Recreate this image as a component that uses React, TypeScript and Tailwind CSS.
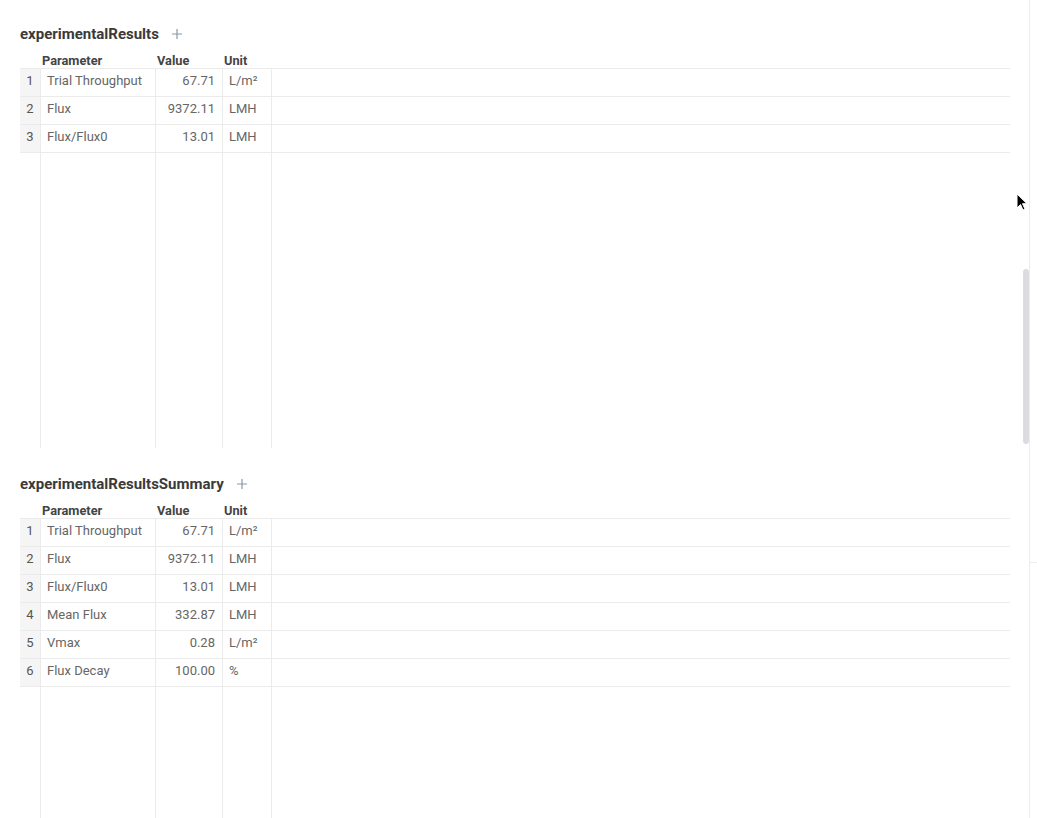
import React from 'react'

type Row = { name: string; value: string; unit: string }

const RESULTS: Row[] = [
  { name: 'Trial Throughput', value: '67.71', unit: 'L/m²' },
  { name: 'Flux', value: '9372.11', unit: 'LMH' },
  { name: 'Flux/Flux0', value: '13.01', unit: 'LMH' },
]

const SUMMARY: Row[] = [
  ...RESULTS,
  { name: 'Mean Flux', value: '332.87', unit: 'LMH' },
  { name: 'Vmax', value: '0.28', unit: 'L/m²' },
  { name: 'Flux Decay', value: '100.00', unit: '%' },
]

const COLS = 'grid grid-cols-[21px_115px_67px_49px_1fr]'

function PlusIcon() {
  return (
    <svg width="10" height="10" viewBox="0 0 10 10" className="text-[#8a97a8]">
      <path d="M5 0v10M0 5h10" stroke="currentColor" strokeWidth="1.2" />
    </svg>
  )
}

function DataTable({ title, rows, bodyHeight }: { title: string; rows: Row[]; bodyHeight: string }) {
  return (
    <section className="pl-5 pr-[19px]">
      <div className="h-5 flex items-center gap-[13px]">
        <h2 className="text-[15px] font-bold text-[#3a3a3a] leading-5">{title}</h2>
        <PlusIcon />
      </div>

      <div className={`${COLS} mt-2 h-[17px] border-b border-[#ebebeb] text-[12.8px] font-bold text-[#444] leading-4`}>
        <div />
        <div className="pt-[1px] pl-[1px]">Parameter</div>
        <div className="pt-[1px] pl-[1px]">Value</div>
        <div className="pt-[1px] pl-[1px]">Unit</div>
        <div />
      </div>

      <div className={`flex flex-col ${bodyHeight}`}>
        {rows.map((r, i) => (
          <div key={r.name} className={`${COLS} h-7 border-b border-[#ebebeb] text-[13px] text-[#666]`}>
            <div className="bg-[#f5f5f5] border-r border-[#ebebeb] flex items-center justify-center pb-[3px] text-[#555]">{i + 1}</div>
            <div className="border-r border-[#ebebeb] flex items-center pl-[6px] pb-[3px]">{r.name}</div>
            <div className="border-r border-[#ebebeb] flex items-center justify-end pr-[7px] pb-[3px]">{r.value}</div>
            <div className="border-r border-[#ebebeb] flex items-center pl-[6px] pb-[3px]">{r.unit}</div>
            <div />
          </div>
        ))}
        <div className={`${COLS} flex-1`}>
          <div className="border-r border-[#ebebeb]" />
          <div className="border-r border-[#ebebeb]" />
          <div className="border-r border-[#ebebeb]" />
          <div className="border-r border-[#ebebeb]" />
          <div />
        </div>
      </div>
    </section>
  )
}

export default function App() {
  return (
    <div className="h-[818px] w-[1037px] overflow-hidden bg-white flex font-['Roboto','Liberation_Sans',sans-serif]">
      <main className="relative w-[1030px] h-full border-r border-[#ececec] pt-6 flex flex-col gap-[26px]">
        <DataTable title="experimentalResults" rows={RESULTS} bodyHeight="h-[379px]" />
        <DataTable title="experimentalResultsSummary" rows={SUMMARY} bodyHeight="h-[400px]" />

        {/* scrollbar thumb */}
        <div className="absolute left-[1023px] top-[269px] w-[6px] h-[175px] rounded-full bg-[#dcdce0]" />

        {/* mouse pointer */}
        <svg className="absolute left-[1016px] top-[193px]" width="13" height="19" viewBox="0 0 13 19">
          <path d="M1 1v14l3.5-3.5 2.5 5.5 2-1-2.5-5.3H11z" fill="#000" stroke="#fff" strokeWidth="1" />
        </svg>
      </main>
      <aside className="flex-1 flex flex-col">
        <div className="h-[563px] border-b border-[#ececec]" />
      </aside>
    </div>
  )
}
